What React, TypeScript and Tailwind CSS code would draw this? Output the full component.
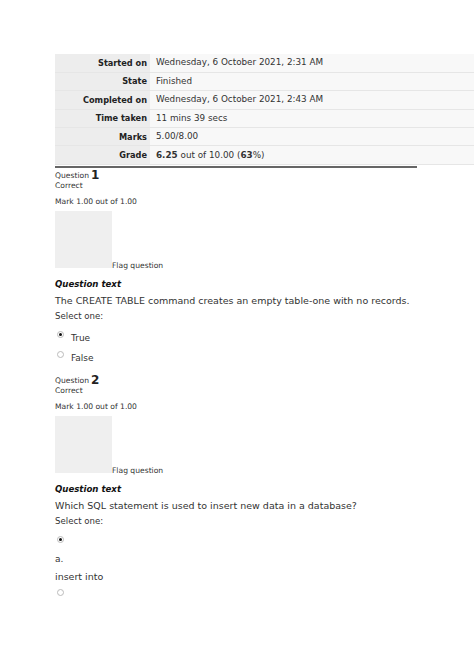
import React from 'react';

const ROWS: { label: string; value: React.ReactNode }[] = [
  { label: 'Started on', value: 'Wednesday, 6 October 2021, 2:31 AM' },
  { label: 'State', value: 'Finished' },
  { label: 'Completed on', value: 'Wednesday, 6 October 2021, 2:43 AM' },
  { label: 'Time taken', value: '11 mins 39 secs' },
  { label: 'Marks', value: '5.00/8.00' },
  {
    label: 'Grade',
    value: (
      <>
        <b>6.25</b> out of 10.00 (<b>63</b>%)
      </>
    ),
  },
];

function Radio({ checked }: { checked?: boolean }) {
  return (
    <span className="inline-flex h-[7px] w-[7px] items-center justify-center rounded-full border border-[#bbb] bg-white">
      {checked && <span className="h-[3px] w-[3px] rounded-full bg-[#111]" />}
    </span>
  );
}

function QuestionHead({ n }: { n: number }) {
  return (
    <div className="text-[#333]">
      <div className="flex h-[10px] items-end text-[7.6px] leading-none">
        Question <span className="ml-[2px] text-[12px] font-bold leading-[10px] text-[#222]">{n}</span>
      </div>
      <div className="mt-[1px] text-[7.6px] leading-[10px]">Correct</div>
      <div className="mt-[6px] text-[7.6px] leading-[10px]">Mark 1.00 out of 1.00</div>
      <div className="mt-[4px] flex items-end">
        <div className="h-[57px] w-[57px] bg-[#efefef]" />
        <span className="mb-[-3px] text-[7.6px] leading-[10px]">Flag question</span>
      </div>
      <div className="mt-[10px] text-[8.6px] font-bold italic leading-[12px] text-[#111]">Question text</div>
    </div>
  );
}

export default function App() {
  return (
    <div
      className="min-h-[670px] bg-white pl-[55px] pt-[54px] text-[#333]"
      style={{ fontFamily: '"DejaVu Sans", Verdana, sans-serif' }}
    >
      <table className="w-[419px] border-collapse text-[8.8px]">
        <tbody>
          {ROWS.map((r) => (
            <tr key={r.label} className="h-[18.4px] border-b border-[#e6e6e6]">
              <th className="w-[95px] bg-[#ededed] pr-[3px] text-right text-[8.2px] font-bold text-[#222]">
                {r.label}
              </th>
              <td className="bg-[#f8f8f8] pl-[6px] text-left">{r.value}</td>
            </tr>
          ))}
        </tbody>
      </table>
      <div className="mt-[1px] h-[2px] w-[362px] bg-[#666]" />

      <div className="mt-[2px]">
        <QuestionHead n={1} />
        <div className="mt-[5px] text-[9.5px] leading-[12px]">
          The CREATE TABLE command creates an empty table-one with no records.
        </div>
        <div className="mt-[3px] text-[8.6px] leading-[12px]">Select one:</div>
        <div className="mt-[9px] flex items-start pl-[2px]">
          <Radio checked />
          <span className="ml-[7px] mt-[1px] text-[9px] leading-[12px]">True</span>
        </div>
        <div className="mt-[7px] flex items-start pl-[2px]">
          <Radio />
          <span className="ml-[7px] mt-[1px] text-[9px] leading-[12px]">False</span>
        </div>
      </div>

      <div className="mt-[11px]">
        <QuestionHead n={2} />
        <div className="mt-[5px] text-[9.5px] leading-[12px]">
          Which SQL statement is used to insert new data in a database?
        </div>
        <div className="mt-[3px] text-[8.6px] leading-[12px]">Select one:</div>
        <div className="mt-[1px] pl-[2px] leading-none">
          <Radio checked />
        </div>
        <div className="mt-[9px] text-[9px] leading-[12px]">a.</div>
        <div className="mt-[6px] text-[9.5px] leading-[12px]">insert into</div>
        <div className="mt-0 pl-[2px] leading-none">
          <Radio />
        </div>
      </div>
    </div>
  );
}
